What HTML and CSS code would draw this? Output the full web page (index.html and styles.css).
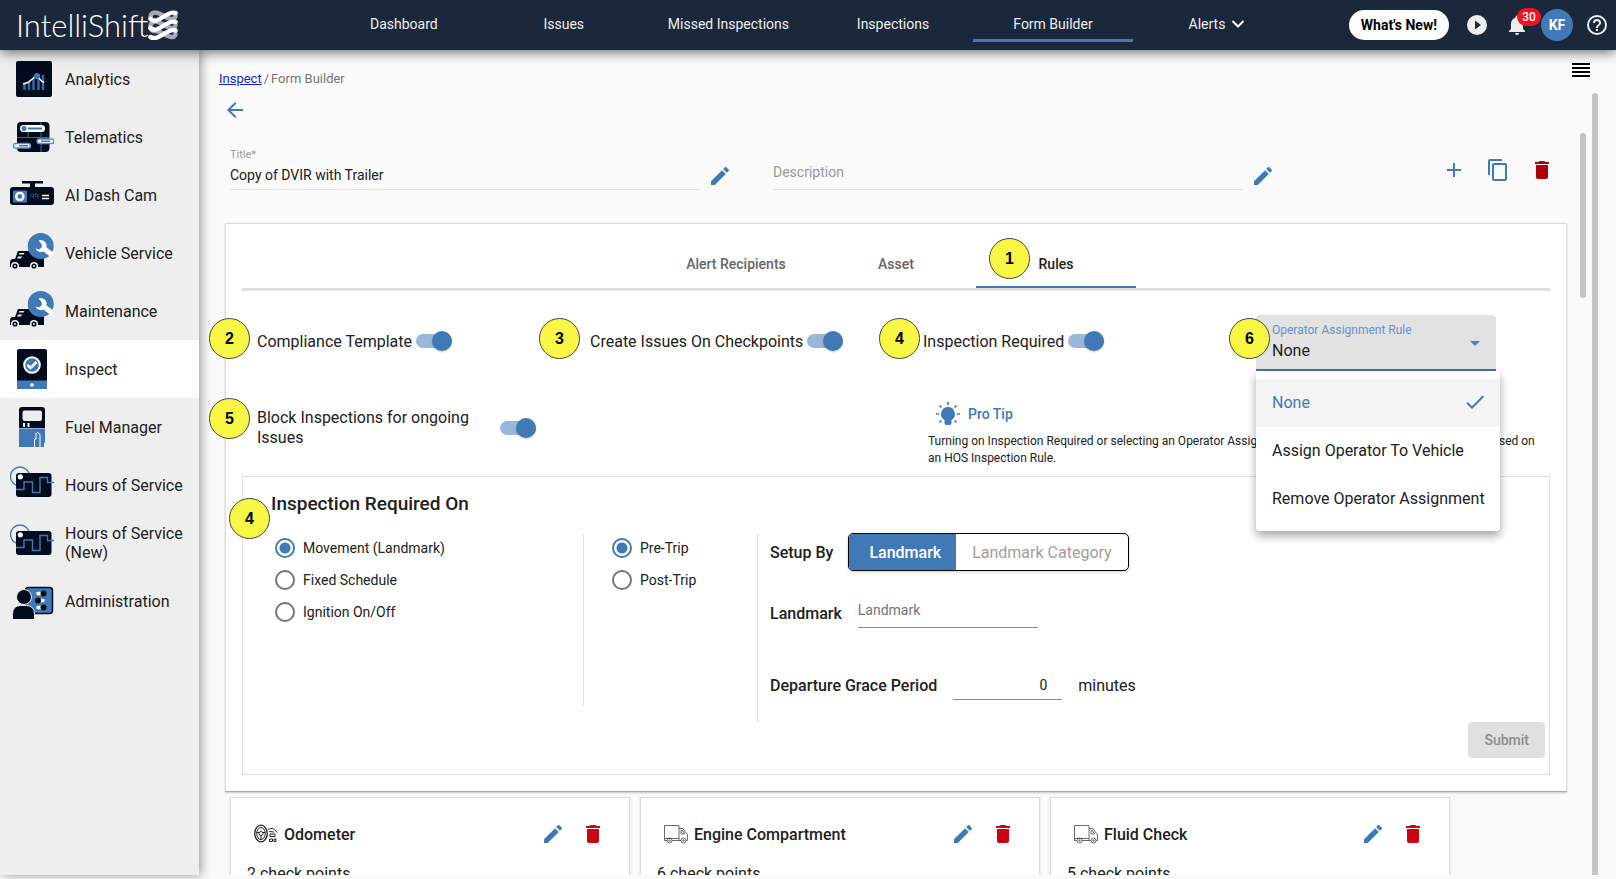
FILE: index.html
```html
<!DOCTYPE html>
<html lang="en">
<head>
    <meta charset="utf-8">
    <title>IntelliShift - Form Builder</title>
    <link rel="stylesheet" href="styles.css">
</head>
<body>
    <!-- Shared icon shapes -->
    <svg class="sprite" aria-hidden="true">
        <symbol id="icon-edit" viewBox="0 0 24 24"><path d="M3 17.25V21h3.75L17.81 9.94l-3.75-3.75L3 17.25zM20.71 7.04a1 1 0 0 0 0-1.41l-2.34-2.34a1 1 0 0 0-1.41 0l-1.83 1.83 3.75 3.75 1.83-1.83z"/></symbol>
        <symbol id="icon-delete" viewBox="0 0 24 24"><path d="M6 19c0 1.1.9 2 2 2h8c1.1 0 2-.9 2-2V7H6v12zM19 4h-3.5l-1-1h-5l-1 1H5v2h14V4z"/></symbol>
        <symbol id="icon-van" viewBox="0 0 24 20">
            <g fill="none" stroke="#444" stroke-width=".8">
                <path d="M3 16.5H.5V1.500h14.500v15H8M15 4.500h4l3 4.500 1.500 1.500v6H22M17 16.500h-2"/>
                <path d="M17 6.500h1.500l2 3.500H17zM.5 14.500h14.500"/>
                <circle cx="5.500" cy="16.500" r="2.500"/><circle cx="5.500" cy="16.500" r=".7"/>
                <circle cx="19.500" cy="16.500" r="2.500"/><circle cx="19.500" cy="16.500" r=".7"/>
            </g>
        </symbol>
        <symbol id="icon-service" viewBox="0 0 44 40">
            <path fill="#020c1c" d="M8 18h11a13 13 0 0 0 15 7v9H0v-5q0-2 2-3h3l3-8z"/>
            <path fill="#eee" d="M9.500 20h5l-1 1.500H9zM8 23.500h4.500l-2 2H7z"/>
            <circle cx="30.700" cy="13" r="13" fill="#4179b7"/>
            <path fill="#fff" d="M28.500 7.500a6 6 0 0 1 8 7l7.500 5.500a13 13 0 0 1-3.500 4l-7-5.500a6 6 0 0 1-8-3l3.500 1 3-2.500-.5-3z"/>
            <g fill="#020c1c" stroke="#eee" stroke-width="1.500"><circle cx="5" cy="33" r="3.300"/><circle cx="24" cy="33" r="3.300"/></g>
            <g fill="#eee"><circle cx="5" cy="33" r="1"/><circle cx="24" cy="33" r="1"/></g>
        </symbol>
        <symbol id="icon-hours" viewBox="0 0 44 40">
            <circle cx="10" cy="11.500" r="9.500" fill="none" stroke="#4179b7" stroke-width="1.300"/>
            <rect x="6" y="8" width="35.500" height="24" rx="3" fill="#020c1c"/>
            <path d="M6 24.500h8V17h8.500v10.500h7.500V12.500h7.500v5H44" fill="none" stroke="#4179b7" stroke-width="1.400"/>
            <circle cx="10.300" cy="11.800" r="2.600" fill="#fff"/>
        </symbol>
    </svg>

    <header class="topbar">
        <a class="logo" href="#">
            <span class="logo-text">IntelliShift</span>
            <svg class="logo-mark" viewBox="0 0 30 30" fill="none" stroke-width="4.500" stroke-linecap="round" aria-hidden="true">
                <path stroke="#a3a9b5" d="M2.500 7C3 1 9 2 14 5s13 7 13.500 1M2.500 16c.5-6 6.500-5 11.500-2s13 7 13.500 1M2.500 18c.5 5 6.500 2 11.500 5s13 7 13.500 1"/>
                <path stroke="#fff" d="M2.500 9c4 3.500 8 1 12.500-2s9-5.500 12.500-4M2.500 18c4 3.500 8 1 12.500-2s9-5.500 12.500-4M2.500 27c4 2.500 8 .5 12.500-2.500s9-5.500 12.500-4"/>
            </svg>
        </a>
        <nav class="main-nav">
            <a href="#">Dashboard</a>
            <a href="#">Issues</a>
            <a href="#">Missed Inspections</a>
            <a href="#">Inspections</a>
            <a href="#" class="active">Form Builder</a>
            <a href="#" class="alerts">Alerts
                <svg width="14" height="10" viewBox="0 0 14 10" aria-hidden="true"><path d="M1.500 2l5.500 5.500L12.500 2" fill="none" stroke="#fff" stroke-width="2"/></svg>
            </a>
        </nav>
        <div class="top-actions">
            <button class="whats-new">What's New!</button>
            <button class="icon-btn" aria-label="Play">
                <svg viewBox="0 0 24 24" fill="#eee"><path d="M12 2a10 10 0 1 0 0 20 10 10 0 0 0 0-20zm-2 14.500v-9l6 4.500-6 4.500z"/></svg>
            </button>
            <button class="icon-btn bell" aria-label="Notifications">
                <svg viewBox="0 0 24 24" fill="#eee"><path d="M12 22c1.100 0 2-.9 2-2h-4a2 2 0 0 0 2 2zm6-6v-5c0-3.070-1.640-5.640-4.500-6.320V4a1.500 1.500 0 0 0-3 0v.68C7.630 5.360 6 7.920 6 11v5l-2 2v1h16v-1l-2-2z"/></svg>
                <span class="count">30</span>
            </button>
            <button class="avatar">KF</button>
            <button class="icon-btn" aria-label="Help">
                <svg viewBox="0 0 24 24" fill="#eee"><path d="M11 18h2v-2h-2v2zm1-16a10 10 0 1 0 0 20 10 10 0 0 0 0-20zm0 18a8 8 0 1 1 0-16 8 8 0 0 1 0 16zm0-14a4 4 0 0 0-4 4h2a2 2 0 1 1 4 0c0 2-3 1.750-3 5h2c0-2.250 3-2.500 3-5a4 4 0 0 0-4-4z"/></svg>
            </button>
        </div>
    </header>

    <div class="shell">
        <aside class="sidebar">
            <a href="#">
                <svg viewBox="0 0 44 40">
                    <rect x="6" y="2" width="36" height="36" rx="2" fill="#020c1c"/>
                    <path d="M14.500 31v-6M19 31v-8M23.500 31V19M28.500 31V15M33 31V16" stroke="#3568a3" stroke-width="2.500"/>
                    <path d="M13 25l5-1.500 8.500-7 5.500 6 2 1" fill="none" stroke="#fff" stroke-width="1.500"/>
                    <circle cx="27" cy="17" r="3" fill="#4179b7"/>
                </svg>
                <span>Analytics</span>
            </a>
            <a href="#">
                <svg viewBox="0 0 44 40">
                    <rect x="7" y="5" width="32.500" height="30" rx="4" fill="#020c1c"/>
                    <path d="M7 20.500h32M31 5v30M18 15v5" stroke="#3568a3" stroke-width="1" fill="none"/>
                    <rect x="10" y="8" width="25" height="7" rx="3.500" fill="#fff"/>
                    <circle cx="14" cy="11.500" r="2.500" fill="#4179b7"/><path d="M18 11.500h14" stroke="#4179b7" stroke-width="2"/>
                    <rect x="3.500" y="26.500" width="17" height="4.500" rx="2.200" fill="#fff" stroke="#5b8fc9" stroke-width="1.500"/>
                    <rect x="27" y="22" width="17" height="4.500" rx="2.200" fill="#fff" stroke="#5b8fc9" stroke-width="1.500"/>
                    <path d="M9 28.700h9M31 24.300h9" stroke="#4179b7" stroke-width="1.500"/>
                </svg>
                <span>Telematics</span>
            </a>
            <a href="#">
                <svg viewBox="0 0 44 40">
                    <path fill="#020c1c" d="M12 6h21v2.500h-8V12h16q3 0 3 3v12q0 3-3 3H3q-3 0-3-3V15q0-3 3-3h17V8.500h-8z"/>
                    <rect x="3" y="15.500" width="14" height="12" rx="1" fill="#4179b7"/>
                    <circle cx="9.800" cy="21.500" r="3.600" fill="#4179b7" stroke="#fff" stroke-width="2.400"/>
                    <path d="M20.500 19h3v5M25 19h3v5M20.500 19v2.500h3M25 19v2.500h3" fill="none" stroke="#33506f" stroke-width=".8"/>
                    <path d="M32 20.500h7M32 23.500h7" stroke="#fff" stroke-width="1.300"/>
                </svg>
                <span>AI Dash Cam</span>
            </a>
            <a href="#"><svg><use href="#icon-service"/></svg><span>Vehicle Service</span></a>
            <a href="#"><svg><use href="#icon-service"/></svg><span>Maintenance</span></a>
            <a href="#" class="current">
                <svg viewBox="0 0 44 40">
                    <rect x="7" width="30" height="40" rx="2" fill="#020c1c"/>
                    <path d="M7 31.500h30V38q0 2-2 2H9q-2 0-2-2z" fill="#4179b7"/>
                    <circle cx="22" cy="16" r="7.800" fill="#4179b7" stroke="#fff" stroke-width="2"/>
                    <path d="M17.500 16l3 3 6-6" fill="none" stroke="#fff" stroke-width="2.500"/>
                    <circle cx="22" cy="36" r="1.800" fill="#fff"/>
                </svg>
                <span>Inspect</span>
            </a>
            <a href="#">
                <svg viewBox="0 0 44 40">
                    <path d="M9 21V3q0-3 3-3h20q3 0 3 3v18z" fill="#020c1c"/>
                    <rect x="12.500" y="3.500" width="19.500" height="10.500" rx="2" fill="#eee"/>
                    <path d="M14 16v4M18.500 16v4" stroke="#eee" stroke-width="2"/>
                    <path d="M9 21.500h26V40H9z" fill="#4179b7"/>
                    <path d="M24.500 40v-8h1.500v-6M27 25l3 2.500V40M34.500 40v-4" fill="none" stroke="#fff" stroke-width="1"/>
                </svg>
                <span>Fuel Manager</span>
            </a>
            <a href="#"><svg><use href="#icon-hours"/></svg><span>Hours of Service</span></a>
            <a href="#"><svg><use href="#icon-hours"/></svg><span>Hours of Service (New)</span></a>
            <a href="#">
                <svg viewBox="0 0 44 40">
                    <rect x="15.500" y="6.500" width="27" height="26" rx="3" fill="#4179b7" stroke="#020c1c" stroke-width="1.500"/>
                    <path d="M28 12.500h5M27 19.500h6M28 26.500h5" stroke="#fff" stroke-width="3.500" stroke-linecap="round"/>
                    <g fill="#020c1c"><circle cx="33.500" cy="12.500" r="3"/><circle cx="28" cy="19.500" r="3"/><circle cx="33.500" cy="26.500" r="3"/></g>
                    <circle cx="14" cy="16" r="7.500" fill="#020c1c" stroke="#eee" stroke-width="1"/>
                    <path d="M2.500 38.500v-5q0-9 8-9h6q8 0 8 9v5z" fill="#020c1c" stroke="#eee" stroke-width="1"/>
                </svg>
                <span>Administration</span>
            </a>
        </aside>

        <main class="content">
            <div class="crumb-row">
                <div class="breadcrumb"><a href="#">Inspect</a><span>/</span>Form Builder</div>
                <button class="icon-btn" aria-label="Menu">
                    <svg viewBox="0 0 24 24"><path d="M3 6h18M3 10h18M3 14h18M3 18h18" stroke="#000" stroke-width="2"/></svg>
                </button>
            </div>
            <button class="icon-btn back" aria-label="Back">
                <svg viewBox="0 0 24 24"><path d="M20 11H7.830l5.590-5.590L12 4l-8 8 8 8 1.410-1.410L7.830 13H20v-2z"/></svg>
            </button>

            <div class="form-head">
                <div class="field">
                    <label for="title">Title*</label>
                    <input type="text" id="title" value="Copy of DVIR with Trailer">
                </div>
                <button class="icon-btn edit" aria-label="Edit title"><svg><use href="#icon-edit"/></svg></button>
                <div class="field">
                    <input type="text" id="description" placeholder="Description" aria-label="Description">
                </div>
                <button class="icon-btn edit" aria-label="Edit description"><svg><use href="#icon-edit"/></svg></button>
                <div class="head-actions">
                    <button class="icon-btn" aria-label="Add"><svg viewBox="0 0 24 24"><path d="M19 13h-6v6h-2v-6H5v-2h6V5h2v6h6v2z"/></svg></button>
                    <button class="icon-btn" aria-label="Copy"><svg viewBox="0 0 24 24"><path d="M16 1H4a2 2 0 0 0-2 2v14h2V3h12V1zm3 4H8a2 2 0 0 0-2 2v14c0 1.100.9 2 2 2h11a2 2 0 0 0 2-2V7a2 2 0 0 0-2-2zm0 16H8V7h11v14z"/></svg></button>
                    <button class="icon-btn dark-red" aria-label="Delete"><svg><use href="#icon-delete"/></svg></button>
                </div>
            </div>

            <section class="card">
                <div class="tabs">
                    <button>Alert Recipients</button>
                    <button>Asset</button>
                    <button class="active">Rules<span class="step step-tab">1</span></button>
                </div>

                <div class="rules">
                    <div class="rule">
                        <span class="step">2</span>
                        <label for="compliance">Compliance Template</label>
                        <input type="checkbox" class="switch" id="compliance" checked>
                    </div>
                    <div class="rule">
                        <span class="step step-far">3</span>
                        <label for="create-issues">Create Issues On Checkpoints</label>
                        <input type="checkbox" class="switch" id="create-issues" checked>
                    </div>
                    <div class="rule">
                        <span class="step step-near">4</span>
                        <label for="required">Inspection Required</label>
                        <input type="checkbox" class="switch" id="required" checked>
                    </div>
                    <div class="rule">
                        <div class="select-field">
                            <label for="operator-rule">Operator Assignment Rule</label>
                            <select id="operator-rule">
                                <option>None</option>
                                <option>Assign Operator To Vehicle</option>
                                <option>Remove Operator Assignment</option>
                            </select>
                            <div class="menu">
                                <button class="selected">None
                                    <svg width="24" height="24" viewBox="0 0 24 24" aria-hidden="true"><path d="M9 16.170L4.830 12l-1.420 1.410L9 19 21 7l-1.410-1.410z"/></svg>
                                </button>
                                <button>Assign Operator To Vehicle</button>
                                <button>Remove Operator Assignment</button>
                            </div>
                        </div>
                        <span class="step step-select">6</span>
                    </div>
                </div>

                <div class="rules second">
                    <div class="rule block-rule">
                        <span class="step">5</span>
                        <label for="block">Block Inspections for ongoing Issues</label>
                        <input type="checkbox" class="switch" id="block" checked>
                    </div>
                    <div class="tip">
                        <div class="tip-title">
                            <svg width="24" height="24" viewBox="0 0 24 24" aria-hidden="true">
                                <path d="M12 5a7 7 0 0 0-3.500 13v3q0 2 2 2h3q2 0 2-2v-3A7 7 0 0 0 12 5z"/>
                                <path d="M12 0v3M0 12h3M21 12h3M3.500 3.500l2 2M20.500 3.500l-2 2M3.500 20.500l2-2M20.500 20.500l-2-2" stroke="#4179b7" stroke-width="1.700"/>
                            </svg>
                            Pro Tip
                        </div>
                        <p>Turning on Inspection Required or selecting an Operator Assignment Rule will override any other settings based on<br>an HOS Inspection Rule.</p>
                    </div>
                </div>

                <div class="required-panel">
                    <span class="step step-panel">4</span>
                    <h2>Inspection Required On</h2>
                    <div class="panel-cols">
                        <div class="radios when">
                            <label><input type="radio" name="when" checked>Movement (Landmark)</label>
                            <label><input type="radio" name="when">Fixed Schedule</label>
                            <label><input type="radio" name="when">Ignition On/Off</label>
                        </div>
                        <div class="radios trip">
                            <label><input type="radio" name="trip" checked>Pre-Trip</label>
                            <label><input type="radio" name="trip">Post-Trip</label>
                        </div>
                        <div class="setup">
                            <div class="setup-row">
                                <strong>Setup By</strong>
                                <div class="segmented">
                                    <button class="on">Landmark</button>
                                    <button>Landmark Category</button>
                                </div>
                            </div>
                            <div class="setup-row">
                                <label for="landmark">Landmark</label>
                                <input type="text" id="landmark" placeholder="Landmark">
                            </div>
                            <div class="setup-row">
                                <label for="grace">Departure Grace Period</label>
                                <input type="text" id="grace" value="0">
                                <span>minutes</span>
                            </div>
                        </div>
                    </div>
                    <button class="submit" disabled>Submit</button>
                </div>
            </section>

            <div class="categories">
                <article class="category">
                    <div class="category-head">
                        <svg class="category-icon" viewBox="0 0 24 20" fill="none" stroke="#222">
                            <ellipse cx="7" cy="9.500" rx="6.300" ry="8.300" stroke-width="1.300"/><ellipse cx="7" cy="9.500" rx="4.300" ry="6"/>
                            <circle cx="7" cy="9.500" r="2"/><path d="M2.500 8.500H5M9 8.500h2.500M7 11.500v4M14 5.500c4-2 7-1 9 3M15 7.500l5 .5M16 12.500v-2.500h5v2.500zM15.500 15h3v2.500h-3zM20 15h2v2.500h-2z"/>
                        </svg>
                        <h3>Odometer</h3>
                        <button class="icon-btn" aria-label="Edit"><svg><use href="#icon-edit"/></svg></button>
                        <button class="icon-btn red" aria-label="Delete"><svg><use href="#icon-delete"/></svg></button>
                    </div>
                    <p>2 check points</p>
                </article>
                <article class="category">
                    <div class="category-head">
                        <svg class="category-icon"><use href="#icon-van"/></svg>
                        <h3>Engine Compartment</h3>
                        <button class="icon-btn" aria-label="Edit"><svg><use href="#icon-edit"/></svg></button>
                        <button class="icon-btn red" aria-label="Delete"><svg><use href="#icon-delete"/></svg></button>
                    </div>
                    <p>6 check points</p>
                </article>
                <article class="category">
                    <div class="category-head">
                        <svg class="category-icon"><use href="#icon-van"/></svg>
                        <h3>Fluid Check</h3>
                        <button class="icon-btn" aria-label="Edit"><svg><use href="#icon-edit"/></svg></button>
                        <button class="icon-btn red" aria-label="Delete"><svg><use href="#icon-delete"/></svg></button>
                    </div>
                    <p>5 check points</p>
                </article>
            </div>

            <div class="scroll-thumb inner"></div>
            <div class="scroll-thumb outer"></div>
        </main>
    </div>
</body>
</html>
```

FILE: styles.css
```css
* {
    box-sizing: border-box;
}

body {
    margin: 0;
    height: 100vh;
    display: flex;
    flex-direction: column;
    overflow: hidden;
    background: #fafafa;
    color: #212121;
    font-family: Roboto, "Liberation Sans", sans-serif;
    font-size: 16px;
}

button,
input,
select {
    font-family: inherit;
    color: inherit;
}

button {
    border: 0;
    padding: 0;
    background: none;
    cursor: pointer;
}

.sprite {
    position: absolute;
    width: 0;
    height: 0;
}

.icon-btn {
    width: 24px;
    height: 24px;
    flex: none;
    fill: #4179b7;
}

.icon-btn svg {
    display: block;
    width: 24px;
    height: 24px;
}

.icon-btn.red {
    fill: #cb0613;
}

.icon-btn.dark-red {
    fill: #a9000c;
}

/* Top bar */
.topbar {
    position: relative;
    z-index: 5;
    flex: none;
    display: flex;
    align-items: center;
    height: 50px;
    padding-right: 7px;
    background: #1b273b;
    color: #eee;
    box-shadow: 0 2px 12px rgba(0, 0, 0, 0.6);
}

.logo {
    flex: 0 0 20%;
    display: flex;
    align-items: center;
    padding-left: 16px;
    color: #fff;
    text-decoration: none;
}

.logo-text {
    font-family: Lato, sans-serif;
    font-weight: 300;
    font-size: 31px;
    line-height: 32px;
}

.logo-mark {
    width: 30px;
    height: 30px;
}

.main-nav {
    display: flex;
    padding-left: 2px;
}

.main-nav a {
    display: flex;
    align-items: center;
    justify-content: center;
    gap: 6px;
    min-width: 160px;
    height: 34px;
    padding: 0 24px;
    border-bottom: 3px solid transparent;
    color: #eee;
    font-size: 14px;
    text-decoration: none;
}

.main-nav .alerts {
    padding-left: 32px;
}

.main-nav .active {
    border-color: #4179b7;
}

.top-actions {
    display: flex;
    align-items: center;
    gap: 16px;
    margin-left: auto;
}

.whats-new {
    height: 30px;
    padding: 0 12px;
    border-radius: 15px;
    background: #fff;
    color: #000;
    font-size: 14px;
    font-weight: 700;
}

.bell {
    position: relative;
}

.count {
    position: absolute;
    left: 12px;
    top: -5px;
    width: 24px;
    border-radius: 9px;
    background: #f4101f;
    color: #fff;
    font-size: 12px;
    font-weight: 500;
    line-height: 18px;
}

.avatar {
    width: 32px;
    height: 32px;
    margin: 0 -4px;
    border-radius: 50%;
    background: #4179b7;
    color: #fff;
    font-size: 14px;
    font-weight: 700;
}

/* Side navigation */
.shell {
    flex: 1;
    min-height: 0;
    display: flex;
    padding-bottom: 4px;
}

.sidebar {
    position: relative;
    z-index: 2;
    flex: 0 0 199px;
    background: #eee;
    box-shadow: 2px 0 10px rgba(0, 0, 0, 0.4);
}

.sidebar a {
    display: flex;
    align-items: center;
    gap: 11px;
    height: 58px;
    padding: 0 10px;
    color: #212121;
    line-height: 19px;
    text-decoration: none;
}

.sidebar .current {
    background: #fff;
}

.sidebar svg {
    flex: none;
    width: 44px;
    height: 40px;
}

/* Page */
.content {
    position: relative;
    flex: 1;
    min-width: 0;
    padding: 8px 49px 0 26px;
    overflow: hidden;
}

.crumb-row {
    display: flex;
    justify-content: space-between;
    margin: 0 -26px 0 -6px;
}

.breadcrumb {
    margin-top: 12px;
    color: #757575;
    font-size: 13px;
    line-height: 18px;
}

.breadcrumb a {
    color: #0f1fc9;
}

.breadcrumb span {
    margin: 0 2px;
}

.back {
    display: block;
    margin-top: 10px;
    margin-left: -2px;
}

.form-head {
    display: flex;
    align-items: flex-end;
    padding: 24px 13px 0 5px;
    margin-bottom: 33px;
}

.field {
    flex: 0 1 470px;
    display: flex;
    flex-direction: column;
}

.field label {
    color: #999;
    font-size: 11px;
    line-height: 18px;
}

.field input {
    width: 100%;
    height: 26px;
    padding: 0 0 3px;
    border: 0;
    border-bottom: 1px solid #e4e4e4;
    background: none;
    font-size: 14px;
}

#description {
    height: 32px;
}

.field input::placeholder {
    color: #999;
}

.edit {
    margin: 0 41px 2px 8px;
}

.head-actions {
    display: flex;
    gap: 20px;
    align-self: flex-start;
    margin: 12px 0 0 auto;
}

.card {
    padding: 16px;
    border: 1px solid #ddd;
    border-bottom-color: #aaa;
    background: #fff;
    box-shadow: 0 1px 2px rgba(0, 0, 0, 0.2);
}

.tabs {
    display: flex;
    justify-content: center;
    border-bottom: 3px solid #e0e0e0;
}

.tabs button {
    position: relative;
    width: 160px;
    height: 48px;
    color: #666;
    font-size: 14px;
    font-weight: 500;
}

.tabs .active {
    border-bottom: 2px solid #4179b7;
    padding-top: 2px;
    color: #212121;
}

/* Numbered markers lying over the form */
.step {
    position: absolute;
    left: -33px;
    top: 3px;
    z-index: 4;
    width: 41px;
    height: 41px;
    border: 1px solid #444;
    border-radius: 50%;
    background: #f9f746;
    color: #000;
    font-family: "Liberation Sans", sans-serif;
    font-size: 16px;
    font-weight: 700;
    line-height: 39px;
    text-align: center;
}

.step-tab {
    left: 13px;
    top: -2px;
}

.step-far {
    left: -36px;
}

.step-near {
    left: -29px;
}

.step-select {
    left: -12px;
}

.step-panel {
    left: -14px;
    top: 21px;
}

/* Rule switches */
.rules {
    display: grid;
    grid-template-columns: repeat(4, 1fr);
    margin: 24px -24px 0 0;
}

.rule {
    position: relative;
    display: flex;
    align-items: center;
    gap: 4px;
    height: 52px;
    padding-left: 15px;
}

.second {
    margin-top: 35px;
}

.block-rule {
    line-height: 20px;
}

.block-rule label {
    flex: 0 0 75%;
}

.block-rule .step {
    top: -4px;
}

.switch {
    position: relative;
    flex: none;
    appearance: none;
    width: 36px;
    height: 14px;
    margin: 0;
    border-radius: 7px;
    background: #9ab7d9;
}

.switch::before {
    content: "";
    position: absolute;
    right: 0;
    top: -3px;
    width: 20px;
    height: 20px;
    border-radius: 50%;
    background: #4179b7;
    box-shadow: 0 1px 2px rgba(0, 0, 0, 0.2);
}

.select-field {
    position: relative;
    align-self: flex-start;
    width: 240px;
    height: 56px;
}

.select-field label {
    position: absolute;
    left: 16px;
    top: 7px;
    color: #6a93c6;
    font-size: 12px;
    line-height: 16px;
}

.select-field select {
    appearance: none;
    width: 100%;
    height: 56px;
    padding: 16px 16px 0;
    border: 0;
    border-bottom: 2px solid #4273a9;
    border-radius: 4px 4px 0 0;
    background: #e2e2e2;
    font-size: 16px;
}

.select-field::after {
    content: "";
    position: absolute;
    right: 16px;
    top: 26px;
    border: 5px solid transparent;
    border-top-color: #4f80b8;
    border-bottom: 0;
}

.menu {
    position: absolute;
    left: 0;
    top: 56px;
    z-index: 3;
    padding: 8px 0;
    border-radius: 0 0 4px 4px;
    background: #fff;
    box-shadow: 0 5px 10px rgba(0, 0, 0, 0.35);
}

.menu button {
    display: flex;
    align-items: center;
    justify-content: space-between;
    width: 244px;
    height: 48px;
    padding: 0 13px 2px 16px;
    font-size: 16px;
    white-space: nowrap;
}

.menu .selected {
    background: #f4f4f4;
    color: #4179b7;
    fill: #4179b7;
}

.tip {
    grid-column: 3 / 5;
    padding-left: 20px;
}

.tip-title {
    display: flex;
    align-items: center;
    gap: 8px;
    padding-left: 8px;
    color: #4179b7;
    fill: #4179b7;
    font-size: 14px;
    font-weight: 500;
}

.tip p {
    margin: 7px 0 9px;
    font-size: 12px;
    line-height: 17px;
    white-space: nowrap;
}

/* Inspection required panel */
.required-panel {
    position: relative;
    display: flex;
    flex-direction: column;
    padding: 15px 4px 16px 28px;
    border: 1px solid #e0e0e0;
}

.required-panel h2 {
    margin: 0 0 18px;
    font-size: 19px;
    font-weight: 500;
    line-height: 24px;
}

.panel-cols {
    display: flex;
    align-items: flex-start;
}

.radios {
    display: flex;
    flex-direction: column;
    gap: 12px;
    padding-top: 4px;
    border-right: 1px solid #e0e0e0;
    font-size: 14px;
}

.radios label {
    display: flex;
    align-items: center;
    gap: 8px;
    height: 20px;
}

.radios input {
    appearance: none;
    width: 20px;
    height: 20px;
    margin: 0;
    border: 2px solid #757575;
    border-radius: 50%;
}

.radios input:checked {
    border-color: #4179b7;
    background: radial-gradient(circle, #4179b7 5px, transparent 6px);
}

.when {
    width: 313px;
    height: 172px;
    padding-left: 4px;
}

.trip {
    width: 174px;
    height: 188px;
    padding-left: 28px;
}

.setup {
    flex: 1;
    padding-left: 12px;
}

.setup-row {
    display: flex;
    align-items: center;
    gap: 16px;
    height: 36px;
    margin-bottom: 36px;
}

.setup-row:first-child {
    gap: 15px;
    margin-bottom: 25px;
}

.setup-row:last-child {
    margin-bottom: 0;
}

.setup-row strong,
.setup-row label {
    font-weight: 500;
}

.setup-row input {
    width: 180px;
    height: 30px;
    padding: 0 0 5px;
    border: 0;
    border-bottom: 1px solid #8a8a8a;
    background: none;
    font-size: 14px;
}

.setup-row input::placeholder {
    color: #757575;
}

.setup-row #grace {
    width: 109px;
    padding: 0 15px 0 0;
    text-align: right;
}

.segmented {
    display: flex;
    height: 38px;
    overflow: hidden;
    border: 1px solid #000;
    border-radius: 5px;
    box-shadow: 0 1px 3px rgba(0, 0, 0, 0.2);
}

.segmented button {
    padding: 0 16px;
    color: #9e9e9e;
    font-size: 16px;
}

.segmented .on {
    padding: 0 15px 0 20px;
    background: #4179b7;
    color: #fff;
    font-weight: 500;
}

.submit {
    align-self: flex-end;
    height: 36px;
    padding: 0 16px;
    border-radius: 4px;
    background: #e0e0e0;
    color: #8c8c8c;
    font-size: 14px;
    font-weight: 500;
}

/* Category cards */
.categories {
    display: grid;
    grid-template-columns: repeat(auto-fill, 400px);
    gap: 10px;
    padding: 5px 0 0 5px;
}

.category {
    padding: 24px 16px;
    border: 1px solid #ddd;
    background: #fff;
    box-shadow: 0 1px 2px rgba(0, 0, 0, 0.15);
}

.category-head {
    display: flex;
    align-items: center;
    gap: 16px;
    padding: 0 8px 0 7px;
}

.category-icon {
    flex: none;
    width: 24px;
    height: 20px;
    margin-right: -10px;
}

.category h3 {
    flex: 1;
    margin: 0;
    font-size: 16px;
    font-weight: 500;
}

.category p {
    margin: 16px 0 0;
    line-height: 24px;
}

/* Scrollbars */
.scroll-thumb {
    position: absolute;
    width: 6px;
    border-radius: 3px;
    background: #c4c4c4;
}

.scroll-thumb.inner {
    right: 30px;
    top: 83px;
    height: 165px;
}

.scroll-thumb.outer {
    right: 18px;
    top: 43px;
    bottom: 0;
    border-radius: 3px 3px 0 0;
}
```
